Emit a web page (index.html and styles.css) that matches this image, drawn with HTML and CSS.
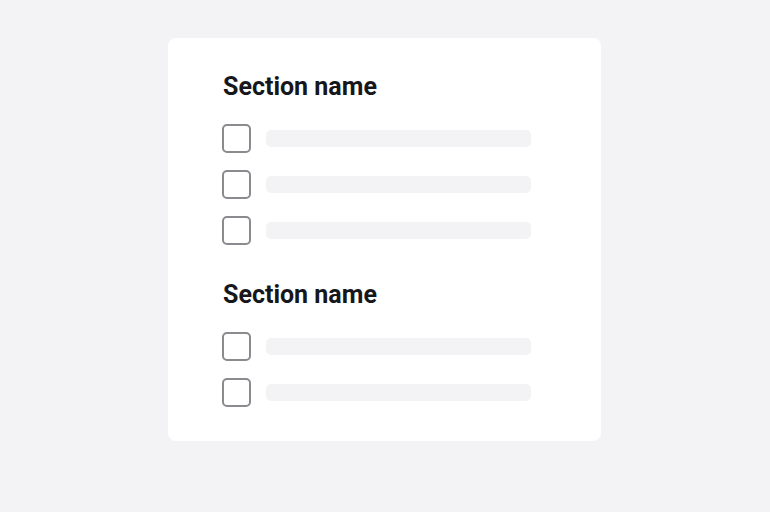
FILE: index.html
```html
<!DOCTYPE html>
<html lang="en">
<head>
<meta charset="utf-8">
<link rel="stylesheet" href="styles.css">
</head>
<body>
<div class="card">
  <section class="section">
    <h2 class="title">Section name</h2>
    <ul class="list">
      <li class="row"><span class="box"></span><span class="bar"></span></li>
      <li class="row"><span class="box"></span><span class="bar"></span></li>
      <li class="row"><span class="box"></span><span class="bar"></span></li>
    </ul>
  </section>
  <section class="section">
    <h2 class="title">Section name</h2>
    <ul class="list">
      <li class="row"><span class="box"></span><span class="bar"></span></li>
      <li class="row"><span class="box"></span><span class="bar"></span></li>
    </ul>
  </section>
</div>
</body>
</html>
```
FILE: styles.css
```css
html, body {
  margin: 0;
  padding: 0;
  background: #f3f3f5;
  font-family: Roboto, "Liberation Sans", sans-serif;
}
body {
  padding: 38px 0 0 168px;
}
.card {
  width: 433px;
  box-sizing: border-box;
  background: #ffffff;
  border-radius: 8px;
  padding: 34px 54px 35px 54px;
  display: flex;
  flex-direction: column;
  gap: 36px;
}
.title {
  margin: 0 0 22px 1px;
  font-size: 25px;
  line-height: 30px;
  font-weight: 700;
  color: #16171a;
}
.list {
  list-style: none;
  margin: 0;
  padding: 0;
  display: flex;
  flex-direction: column;
  gap: 18px;
}
.row {
  display: flex;
  align-items: center;
  gap: 15px;
  height: 28px;
}
.box {
  width: 29px;
  height: 29px;
  box-sizing: border-box;
  border: 2px solid #8a8b8e;
  border-radius: 5px;
}
.bar {
  width: 265px;
  height: 17px;
  border-radius: 5px;
  background: #f3f3f5;
}
```
